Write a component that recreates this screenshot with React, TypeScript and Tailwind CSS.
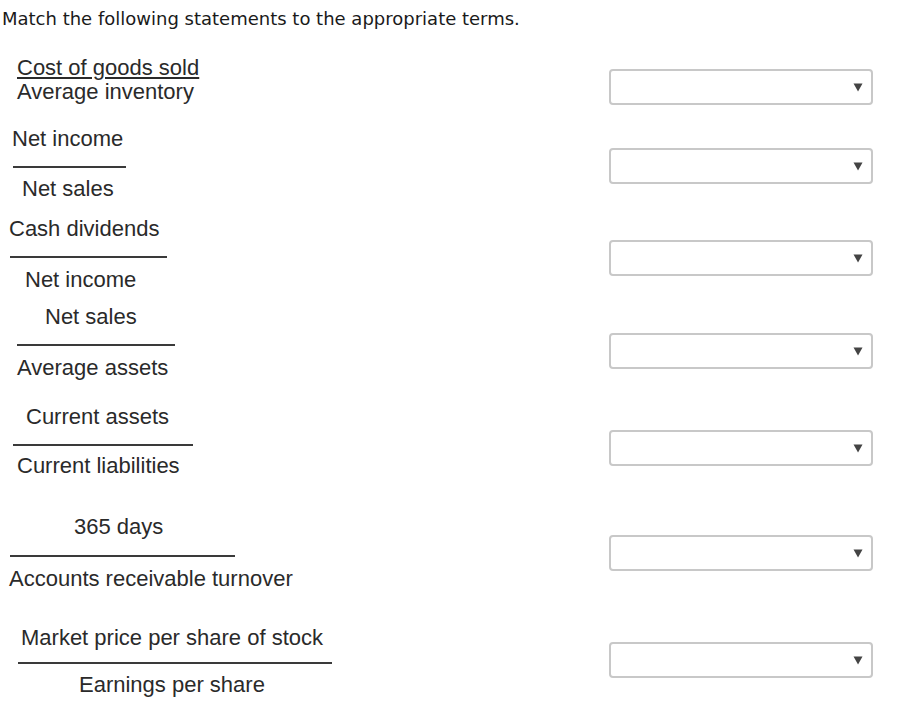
import React from "react";

const Select = ({ mt }: { mt: string }) => (
  <div
    className={`${mt} w-[264px] h-[36px] shrink-0 border-2 border-[#c8c8c8] rounded-[4px] bg-white flex items-center justify-end pr-[8px]`}
  >
    <svg width="10" height="9" viewBox="0 0 10 9">
      <polygon points="0.5,0.5 9.5,0.5 5,8.5" fill="#444444" />
    </svg>
  </div>
);

const T = ({ pl, children, u }: { pl: string; children: React.ReactNode; u?: boolean }) => (
  <div className={`${pl} h-[24px] leading-[24px] whitespace-nowrap`}>
    <span className={u ? "underline decoration-[1.5px] underline-offset-[2px]" : ""}>{children}</span>
  </div>
);

const Line = ({ cls }: { cls: string }) => <div className={`${cls} h-[2px] bg-[#3a3a3a]`} />;

export default function App() {
  return (
    <div className="w-[916px] h-[727px] bg-white overflow-hidden">
      <div
        className="pl-[2px] pt-[7px] h-[31px] text-[18px] leading-[24px] text-[#1a1a1a]"
        style={{ fontFamily: '"DejaVu Sans", Verdana, sans-serif' }}
      >
        Match the following statements to the appropriate terms.
      </div>
      <div
        className="flex flex-col text-[22px] text-[#2a2a2a]"
        style={{ fontFamily: '"Liberation Sans", Arial, sans-serif' }}
      >
        {/* Row 1 */}
        <div className="flex items-start mt-[25px]">
          <div className="w-[609px] shrink-0">
            <T pl="pl-[17px]" u>
              Cost of goods sold
            </T>
            <T pl="pl-[17px]">Average inventory</T>
          </div>
          <Select mt="mt-[13px]" />
        </div>
        {/* Row 2 */}
        <div className="flex items-start mt-[22px]">
          <div className="w-[609px] shrink-0">
            <T pl="pl-[12px]">Net income</T>
            <Line cls="mt-[15px] ml-[13px] w-[113px]" />
            <div className="mt-[9px]">
              <T pl="pl-[22px]">Net sales</T>
            </div>
          </div>
          <Select mt="mt-[21px]" />
        </div>
        {/* Row 3 */}
        <div className="flex items-start mt-[16px]">
          <div className="w-[609px] shrink-0">
            <T pl="pl-[9px]">Cash dividends</T>
            <Line cls="mt-[15px] ml-[10px] w-[157px]" />
            <div className="mt-[10px]">
              <T pl="pl-[25px]">Net income</T>
            </div>
          </div>
          <Select mt="mt-[23px]" />
        </div>
        {/* Row 4 */}
        <div className="flex items-start mt-[13px]">
          <div className="w-[609px] shrink-0">
            <T pl="pl-[45px]">Net sales</T>
            <Line cls="mt-[15px] ml-[17px] w-[158px]" />
            <div className="mt-[10px]">
              <T pl="pl-[17px]">Average assets</T>
            </div>
          </div>
          <Select mt="mt-[28px]" />
        </div>
        {/* Row 5 */}
        <div className="flex items-start mt-[25px]">
          <div className="w-[609px] shrink-0">
            <T pl="pl-[26px]">Current assets</T>
            <Line cls="mt-[15px] ml-[13px] w-[180px]" />
            <div className="mt-[8px]">
              <T pl="pl-[17px]">Current liabilities</T>
            </div>
          </div>
          <Select mt="mt-[25px]" />
        </div>
        {/* Row 6 */}
        <div className="flex items-start mt-[37px]">
          <div className="w-[609px] shrink-0">
            <T pl="pl-[74px]">365 days</T>
            <Line cls="mt-[16px] ml-[10px] w-[225px]" />
            <div className="mt-[10px]">
              <T pl="pl-[9px]">Accounts receivable turnover</T>
            </div>
          </div>
          <Select mt="mt-[20px]" />
        </div>
        {/* Row 7 */}
        <div className="flex items-start mt-[35px]">
          <div className="w-[609px] shrink-0">
            <T pl="pl-[21px]">Market price per share of stock</T>
            <Line cls="mt-[12px] ml-[18px] w-[314px]" />
            <div className="mt-[9px]">
              <T pl="pl-[79px]">Earnings per share</T>
            </div>
          </div>
          <Select mt="mt-[16px]" />
        </div>
      </div>
    </div>
  );
}
